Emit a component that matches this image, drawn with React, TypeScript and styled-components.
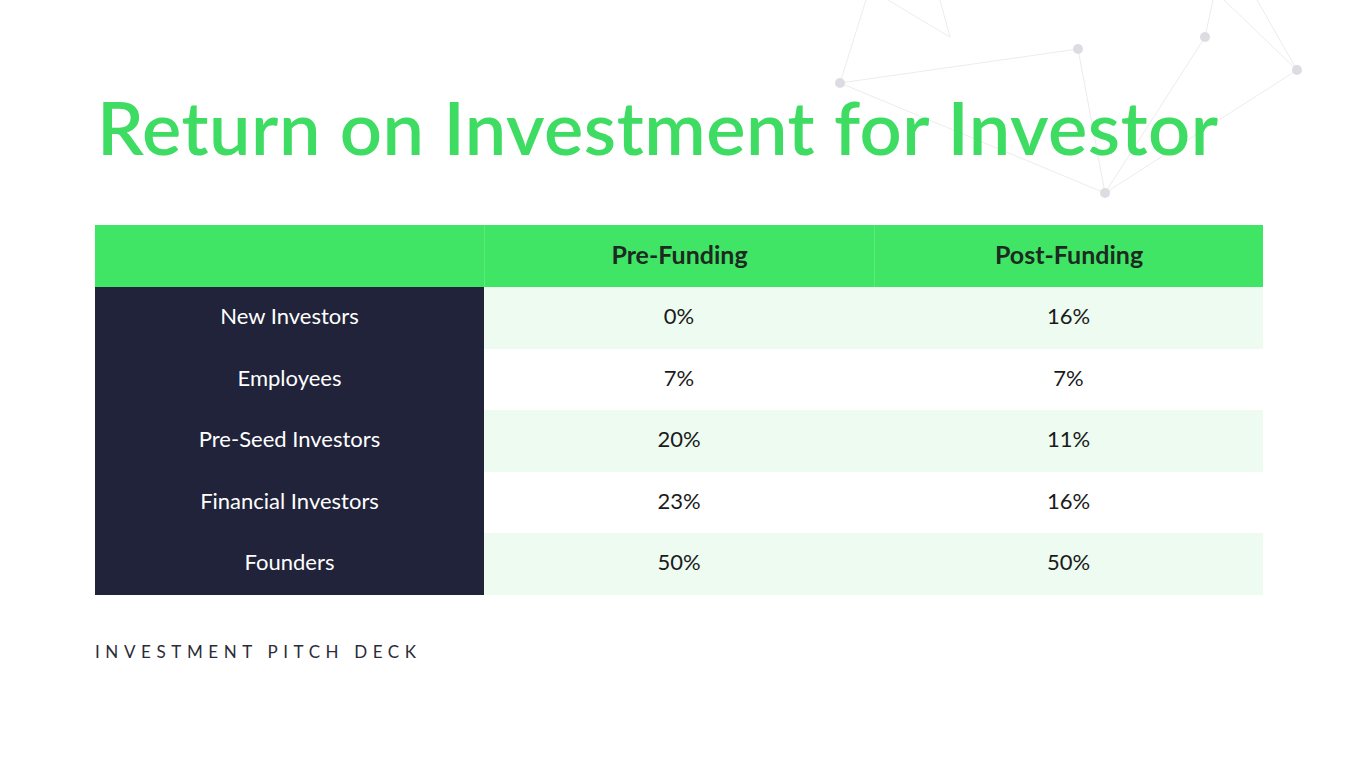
import { createGlobalStyle, styled } from "styled-components";

const GlobalStyle = createGlobalStyle`
  html, body {
    margin: 0;
    padding: 0;
    background: #ffffff;
  }
  body {
    font-family: "Lato", "Open Sans", sans-serif;
  }
`;

const rows = [
  { label: "New Investors", pre: "0%", post: "16%" },
  { label: "Employees", pre: "7%", post: "7%" },
  { label: "Pre-Seed Investors", pre: "20%", post: "11%" },
  { label: "Financial Investors", pre: "23%", post: "16%" },
  { label: "Founders", pre: "50%", post: "50%" },
];

const nodes: [number, number][] = [
  [840, 83],
  [1078, 49],
  [1205, 37],
  [1297, 70],
  [1105, 193],
];

const lines: [number, number, number, number][] = [
  [840, 83, 1078, 49],
  [1078, 49, 1105, 193],
  [840, 83, 1105, 193],
  [1105, 193, 1205, 37],
  [1105, 193, 1297, 70],
  [1205, 37, 1213, 0],
  [1297, 70, 1224, 0],
  [1297, 70, 1257, 0],
  [840, 83, 866, 0],
  [888, 0, 950, 37],
  [940, 0, 950, 37],
];

function Network() {
  return (
    <Decor width="1366" height="220" viewBox="0 0 1366 220">
      {lines.map(([x1, y1, x2, y2], i) => (
        <line key={i} x1={x1} y1={y1} x2={x2} y2={y2} stroke="#ececef" strokeWidth="1" />
      ))}
      {nodes.map(([cx, cy], i) => (
        <circle key={i} cx={cx} cy={cy} r="5" fill="#dcdde3" />
      ))}
    </Decor>
  );
}

export default function App() {
  return (
    <Slide>
      <GlobalStyle />
      <Network />
      <Content>
        <Title>Return on Investment for Investor</Title>
        <Table>
          <HeadRow>
            <HeadCell />
            <HeadCell $divider>Pre-Funding</HeadCell>
            <HeadCell $divider>Post-Funding</HeadCell>
          </HeadRow>
          {rows.map((r, i) => (
            <Row key={r.label} $tinted={i % 2 === 0}>
              <LabelCell>{r.label}</LabelCell>
              <ValueCell>{r.pre}</ValueCell>
              <ValueCell>{r.post}</ValueCell>
            </Row>
          ))}
        </Table>
        <Footer>INVESTMENT PITCH DECK</Footer>
      </Content>
    </Slide>
  );
}

const Slide = styled.div`
  position: relative;
  width: 1366px;
  height: 768px;
  overflow: hidden;
  background: #ffffff;
`;

const Decor = styled.svg`
  position: absolute;
  top: 0;
  left: 0;
  pointer-events: none;
`;

const Content = styled.div`
  position: relative;
  display: flex;
  flex-direction: column;
  padding: 83px 0 0 95px;
  width: 1168px;
`;

const Title = styled.h1`
  margin: 0 0 0 2px;
  font-family: "Lato", "Open Sans", sans-serif;
  font-weight: 600;
  font-size: 74px;
  line-height: 88px;
  color: #3edc62;
  letter-spacing: 0.5px;
  white-space: nowrap;
`;

const Table = styled.div`
  display: flex;
  flex-direction: column;
  margin-top: 54px;
`;

const HeadRow = styled.div`
  display: grid;
  grid-template-columns: 389px 390px 389px;
  height: 62px;
  background: #41e566;
`;

const HeadCell = styled.div<{ $divider?: boolean }>`
  display: flex;
  align-items: center;
  justify-content: center;
  padding-bottom: 4px;
  box-sizing: border-box;
  border-left: ${(p) => (p.$divider ? "1px solid #5dea7c" : "none")};
  font-family: "Lato", sans-serif;
  font-weight: 700;
  font-size: 25px;
  color: #1c2a20;
`;

const Row = styled.div<{ $tinted: boolean }>`
  display: grid;
  grid-template-columns: 389px 390px 389px;
  height: 61.5px;
  background: ${(p) => (p.$tinted ? "#edfbf0" : "#ffffff")};
`;

const LabelCell = styled.div`
  display: flex;
  align-items: center;
  justify-content: center;
  padding-bottom: 4px;
  box-sizing: border-box;
  background: #21233a;
  color: #ffffff;
  font-family: "Lato", sans-serif;
  font-size: 22px;
`;

const ValueCell = styled.div`
  display: flex;
  align-items: center;
  justify-content: center;
  padding-bottom: 4px;
  box-sizing: border-box;
  color: #1a1a1a;
  font-family: "Lato", sans-serif;
  font-size: 22px;
`;

const Footer = styled.div`
  margin-top: 46px;
  font-family: "Lato", sans-serif;
  font-size: 17px;
  letter-spacing: 5.6px;
  color: #2a2c38;
`;
